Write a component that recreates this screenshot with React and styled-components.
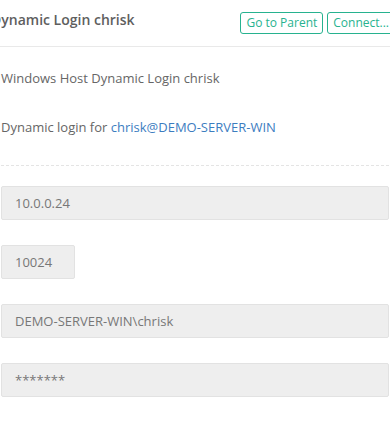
import React from 'react';
import styled, { createGlobalStyle } from 'styled-components';

const GlobalStyle = createGlobalStyle`
  html, body {
    margin: 0;
    padding: 0;
    background: #ffffff;
    overflow: hidden;
  }
  body {
    font-family: "Open Sans", "Liberation Sans", Arial, sans-serif;
  }
`;

const Panel = styled.div`
  width: 390px;
  box-sizing: border-box;
`;

const Header = styled.div`
  display: flex;
  align-items: flex-start;
  justify-content: space-between;
  height: 46px;
  border-bottom: 1px solid #e9e9e9;
`;

const Title = styled.h3`
  margin: 10px 0 0 -9px;
  font-size: 14px;
  line-height: 20px;
  font-weight: 600;
  color: #5e5e5e;
  white-space: nowrap;
`;

const Actions = styled.div`
  display: flex;
  gap: 4px;
  margin-top: 12px;
  margin-right: -5px;
`;

const OutlineButton = styled.button`
  height: 22px;
  padding: 0 5px;
  border: 1px solid #27b28f;
  border-radius: 3px;
  background: #ffffff;
  color: #27b28f;
  font-family: "Open Sans", "Liberation Sans", Arial, sans-serif;
  font-size: 12px;
  line-height: 20px;
  white-space: nowrap;
  cursor: pointer;
`;

const Body = styled.div`
  padding: 21px 1px 0 1px;
`;

const Text = styled.p`
  margin: 0 0 ${p => p.$gap || 0}px 0;
  font-size: 13px;
  line-height: 20px;
  color: #666666;
`;

const Link = styled.a`
  color: #3c7dbf;
  text-decoration: none;
`;

const Divider = styled.hr`
  margin: 28px 0 20px 0;
  border: 0;
  border-top: 1px dashed #e4e4e4;
  height: 0;
`;

const Fields = styled.div`
  display: flex;
  flex-direction: column;
  align-items: flex-start;
  gap: 25px;
`;

const Field = styled.input`
  box-sizing: border-box;
  width: ${p => p.$width || '388px'};
  height: 34px;
  padding: 0 13px;
  border: 1px solid #e2e2e2;
  border-radius: 2px;
  background: #eeeeee;
  color: #777777;
  font-family: "Open Sans", "Liberation Sans", Arial, sans-serif;
  font-size: 13px;
  outline: none;
`;

const App = () => {
  return (
    <Panel>
      <GlobalStyle />
      <Header>
        <Title>Dynamic Login chrisk</Title>
        <Actions>
          <OutlineButton>Go to Parent</OutlineButton>
          <OutlineButton>Connect...</OutlineButton>
        </Actions>
      </Header>
      <Body>
        <Text $gap={29}>Windows Host Dynamic Login chrisk</Text>
        <Text>
          Dynamic login for <Link href="#">chrisk@DEMO-SERVER-WIN</Link>
        </Text>
        <Divider />
        <Fields>
          <Field readOnly value="10.0.0.24" />
          <Field readOnly value="10024" $width="74px" />
          <Field readOnly value="DEMO-SERVER-WIN\chrisk" />
          <Field readOnly value="*******" />
        </Fields>
      </Body>
    </Panel>
  );
};

export default App;
